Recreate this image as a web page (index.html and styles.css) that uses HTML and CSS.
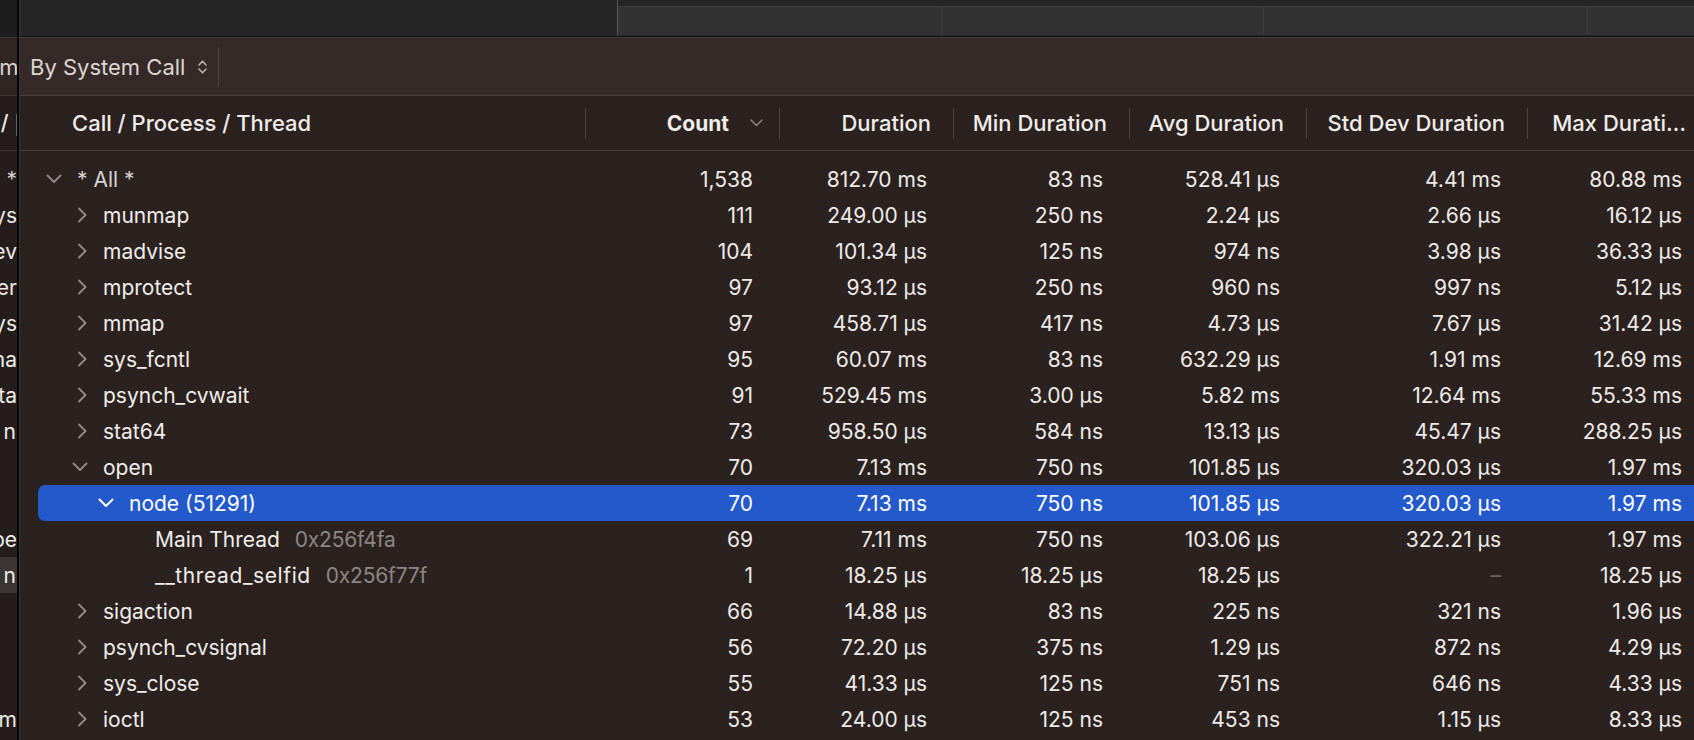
FILE: index.html
```html
<!DOCTYPE html>
<html lang="en">
<head>
<meta charset="utf-8">
<title>System Calls</title>
<link rel="stylesheet" href="styles.css">
</head>
<body>
<div class="app">
  <aside class="side">
    <div class="side-top"></div>
    <div class="side-toolbar"><span class="clip">By System</span></div>
    <div class="side-header"><span class="clip">Call / <i class="side-sep"></i></span></div>
    <div class="side-body">
      <div class="side-row"><span class="clip dim">* All&nbsp;*</span></div>
      <div class="side-row"><span class="clip">sys</span></div>
      <div class="side-row"><span class="clip">dev</span></div>
      <div class="side-row"><span class="clip">ker</span></div>
      <div class="side-row"><span class="clip">sys</span></div>
      <div class="side-row"><span class="clip">ma</span></div>
      <div class="side-row"><span class="clip">sta</span></div>
      <div class="side-row"><span class="clip short">n</span></div>
      <div class="side-row"></div>
      <div class="side-row"></div>
      <div class="side-row"><span class="clip">ope</span></div>
      <div class="side-row side-sel"><span class="clip short">n</span></div>
      <div class="side-row"></div>
      <div class="side-row"></div>
      <div class="side-row"></div>
      <div class="side-row"><span class="clip">comm</span></div>
    </div>
  </aside>
  <div class="divider"></div>
  <main class="main">
    <div class="top">
      <div class="top-left"></div>
      <div class="top-right">
        <div class="track">
          <div class="track-cell"></div>
          <div class="track-cell"></div>
          <div class="track-cell"></div>
          <div class="track-cell"></div>
        </div>
      </div>
    </div>

    <div class="toolbar">
      <span class="picker">By System Call</span>
      <svg class="updown" width="11" height="16" viewBox="0 0 11 16"><path d="M2 6 L5.5 2.2 L9 6 M2 10 L5.5 13.8 L9 10" fill="none" stroke="#b9b2af" stroke-width="1.6" stroke-linecap="round" stroke-linejoin="round"/></svg>
      <span class="tb-sep"></span>
    </div>

    <div class="table">
      <div class="thead">
        <div class="th th-call">Call / Process / Thread</div>
        <div class="th num sorted"><span>Count</span><svg class="sort" width="13" height="8" viewBox="0 0 13 8"><path d="M1 1 L6.5 6.5 L12 1" fill="none" stroke="#8a8482" stroke-width="1.5" stroke-linecap="round" stroke-linejoin="round"/></svg></div>
        <div class="th num">Duration</div>
        <div class="th num">Min Duration</div>
        <div class="th num">Avg Duration</div>
        <div class="th num">Std Dev Duration</div>
        <div class="th num th-last">Max Durati…</div>
      </div>

      <div class="tbody">
        <div class="row">
          <div class="call lvl0"><span class="chev"><svg width="16" height="10" viewBox="0 0 16 10"><path d="M1.5 1.5 L8 8 L14.5 1.5"/></svg></span><span class="label dim">* All *</span></div>
          <div class="td">1,538</div><div class="td">812.70 ms</div><div class="td">83 ns</div><div class="td">528.41 µs</div><div class="td">4.41 ms</div><div class="td">80.88 ms</div>
        </div>
        <div class="row">
          <div class="call lvl1"><span class="chev"><svg class="r" width="10" height="16" viewBox="0 0 10 16"><path d="M2 1.5 L8.5 8 L2 14.5"/></svg></span><span class="label">munmap</span></div>
          <div class="td">111</div><div class="td">249.00 µs</div><div class="td">250 ns</div><div class="td">2.24 µs</div><div class="td">2.66 µs</div><div class="td">16.12 µs</div>
        </div>
        <div class="row">
          <div class="call lvl1"><span class="chev"><svg class="r" width="10" height="16" viewBox="0 0 10 16"><path d="M2 1.5 L8.5 8 L2 14.5"/></svg></span><span class="label">madvise</span></div>
          <div class="td">104</div><div class="td">101.34 µs</div><div class="td">125 ns</div><div class="td">974 ns</div><div class="td">3.98 µs</div><div class="td">36.33 µs</div>
        </div>
        <div class="row">
          <div class="call lvl1"><span class="chev"><svg class="r" width="10" height="16" viewBox="0 0 10 16"><path d="M2 1.5 L8.5 8 L2 14.5"/></svg></span><span class="label">mprotect</span></div>
          <div class="td">97</div><div class="td">93.12 µs</div><div class="td">250 ns</div><div class="td">960 ns</div><div class="td">997 ns</div><div class="td">5.12 µs</div>
        </div>
        <div class="row">
          <div class="call lvl1"><span class="chev"><svg class="r" width="10" height="16" viewBox="0 0 10 16"><path d="M2 1.5 L8.5 8 L2 14.5"/></svg></span><span class="label">mmap</span></div>
          <div class="td">97</div><div class="td">458.71 µs</div><div class="td">417 ns</div><div class="td">4.73 µs</div><div class="td">7.67 µs</div><div class="td">31.42 µs</div>
        </div>
        <div class="row">
          <div class="call lvl1"><span class="chev"><svg class="r" width="10" height="16" viewBox="0 0 10 16"><path d="M2 1.5 L8.5 8 L2 14.5"/></svg></span><span class="label">sys_fcntl</span></div>
          <div class="td">95</div><div class="td">60.07 ms</div><div class="td">83 ns</div><div class="td">632.29 µs</div><div class="td">1.91 ms</div><div class="td">12.69 ms</div>
        </div>
        <div class="row">
          <div class="call lvl1"><span class="chev"><svg class="r" width="10" height="16" viewBox="0 0 10 16"><path d="M2 1.5 L8.5 8 L2 14.5"/></svg></span><span class="label">psynch_cvwait</span></div>
          <div class="td">91</div><div class="td">529.45 ms</div><div class="td">3.00 µs</div><div class="td">5.82 ms</div><div class="td">12.64 ms</div><div class="td">55.33 ms</div>
        </div>
        <div class="row">
          <div class="call lvl1"><span class="chev"><svg class="r" width="10" height="16" viewBox="0 0 10 16"><path d="M2 1.5 L8.5 8 L2 14.5"/></svg></span><span class="label">stat64</span></div>
          <div class="td">73</div><div class="td">958.50 µs</div><div class="td">584 ns</div><div class="td">13.13 µs</div><div class="td">45.47 µs</div><div class="td">288.25 µs</div>
        </div>
        <div class="row">
          <div class="call lvl1"><span class="chev"><svg width="16" height="10" viewBox="0 0 16 10"><path d="M1.5 1.5 L8 8 L14.5 1.5"/></svg></span><span class="label">open</span></div>
          <div class="td">70</div><div class="td">7.13 ms</div><div class="td">750 ns</div><div class="td">101.85 µs</div><div class="td">320.03 µs</div><div class="td">1.97 ms</div>
        </div>
        <div class="row sel">
          <div class="call lvl2"><span class="chev"><svg width="16" height="10" viewBox="0 0 16 10"><path d="M1.5 1.5 L8 8 L14.5 1.5"/></svg></span><span class="label">node (51291)</span></div>
          <div class="td">70</div><div class="td">7.13 ms</div><div class="td">750 ns</div><div class="td">101.85 µs</div><div class="td">320.03 µs</div><div class="td">1.97 ms</div>
        </div>
        <div class="row">
          <div class="call lvl3"><span class="label">Main Thread</span><span class="tid">0x256f4fa</span></div>
          <div class="td">69</div><div class="td">7.11 ms</div><div class="td">750 ns</div><div class="td">103.06 µs</div><div class="td">322.21 µs</div><div class="td">1.97 ms</div>
        </div>
        <div class="row">
          <div class="call lvl3"><span class="label uscore">__thread_selfid</span><span class="tid">0x256f77f</span></div>
          <div class="td">1</div><div class="td">18.25 µs</div><div class="td">18.25 µs</div><div class="td">18.25 µs</div><div class="td none">–</div><div class="td">18.25 µs</div>
        </div>
        <div class="row">
          <div class="call lvl1"><span class="chev"><svg class="r" width="10" height="16" viewBox="0 0 10 16"><path d="M2 1.5 L8.5 8 L2 14.5"/></svg></span><span class="label">sigaction</span></div>
          <div class="td">66</div><div class="td">14.88 µs</div><div class="td">83 ns</div><div class="td">225 ns</div><div class="td">321 ns</div><div class="td">1.96 µs</div>
        </div>
        <div class="row">
          <div class="call lvl1"><span class="chev"><svg class="r" width="10" height="16" viewBox="0 0 10 16"><path d="M2 1.5 L8.5 8 L2 14.5"/></svg></span><span class="label">psynch_cvsignal</span></div>
          <div class="td">56</div><div class="td">72.20 µs</div><div class="td">375 ns</div><div class="td">1.29 µs</div><div class="td">872 ns</div><div class="td">4.29 µs</div>
        </div>
        <div class="row">
          <div class="call lvl1"><span class="chev"><svg class="r" width="10" height="16" viewBox="0 0 10 16"><path d="M2 1.5 L8.5 8 L2 14.5"/></svg></span><span class="label">sys_close</span></div>
          <div class="td">55</div><div class="td">41.33 µs</div><div class="td">125 ns</div><div class="td">751 ns</div><div class="td">646 ns</div><div class="td">4.33 µs</div>
        </div>
        <div class="row">
          <div class="call lvl1"><span class="chev"><svg class="r" width="10" height="16" viewBox="0 0 10 16"><path d="M2 1.5 L8.5 8 L2 14.5"/></svg></span><span class="label">ioctl</span></div>
          <div class="td">53</div><div class="td">24.00 µs</div><div class="td">125 ns</div><div class="td">453 ns</div><div class="td">1.15 µs</div><div class="td">8.33 µs</div>
        </div>
      </div>
    </div>
  </main>
</div>
</body>
</html>
```

FILE: styles.css
```css
* { box-sizing: border-box; }

html, body {
  margin: 0;
  padding: 0;
  width: 1694px;
  height: 740px;
  overflow: hidden;
  background: #2b2220;
}

body {
  font-family: Inter, "Noto Sans", "Liberation Sans", sans-serif;
  font-size: 21px;
  color: #efebe9;
}

.app {
  display: flex;
  width: 1694px;
  height: 740px;
  overflow: hidden;
}

/* ---------- left clipped panel ---------- */
.side {
  width: 17px;
  flex: none;
  display: flex;
  flex-direction: column;
  background: #241d1c;
  overflow: hidden;
}
.side-top { height: 37px; background: #1d1d1d; flex: none; }
.side-toolbar {
  height: 59px;
  flex: none;
  background: #2f2522;
  border-top: 1px solid #3d3331;
  border-bottom: 1px solid #403633;
  display: flex;
  justify-content: flex-end;
  align-items: center;
  color: #d9d3d0;
  font-size: 22px;
  letter-spacing: -1.5px;
}
.side-header {
  height: 55px;
  flex: none;
  border-bottom: 1px solid #3f3533;
  display: flex;
  justify-content: flex-end;
  align-items: center;
  font-weight: 500;
}
.side-sep {
  display: inline-block;
  width: 1px;
  height: 22px;
  margin-left: 2px;
  background: #6a625f;
  vertical-align: middle;
}
.side-body { padding-top: 10px; }
.side-row {
  height: 36px;
  display: flex;
  justify-content: flex-end;
  align-items: center;
}
.side-sel { background: #3b3534; }
.clip { white-space: nowrap; flex: none; }
.clip.short { margin-right: 1px; }
.dim { color: #d6d2d0; }

.divider {
  width: 2px;
  flex: none;
  background: #060606;
}

/* ---------- main ---------- */
.main {
  flex: none;
  width: 1675px;
  border-left: 1px solid #3b3331;
  display: flex;
  flex-direction: column;
}

.top {
  height: 37px;
  flex: none;
  display: flex;
  background: #252525;
  border-bottom: 1px solid #161616;
}
.top-left {
  width: 598px;
  flex: none;
  border-right: 1px solid #5a5a5a;
}
.top-right {
  flex: 1;
  padding-top: 6px;
}
.track {
  height: 29px;
  display: grid;
  grid-template-columns: 323px 322px 324px 1fr;
  background: #323232;
  border-top: 1px solid #3e3e3e;
}
.track-cell + .track-cell { border-left: 1px solid #3d3d3d; }

.toolbar {
  height: 59px;
  flex: none;
  display: flex;
  align-items: center;
  padding-left: 10px;
  background: #352a27;
  border-top: 1px solid #463b38;
  border-bottom: 1px solid #4a3f3c;
}
.picker { color: #dcd6d3; font-size: 22px; }
.updown { margin-left: 12px; }
.tb-sep {
  width: 1px;
  height: 39px;
  margin-left: 10px;
  background: #4e4442;
}

/* ---------- table ---------- */
.table {
  --cols: 565px 194px 174px 176px 177px 221px 181px;
}
.thead {
  height: 55px;
  display: grid;
  grid-template-columns: var(--cols);
  align-items: center;
  border-bottom: 1px solid #463c3a;
}
.th {
  font-weight: 500;
  font-size: 22px;
  color: #f0ecea;
  white-space: nowrap;
  height: 31px;
  display: flex;
  align-items: center;
}
.th-call { padding-left: 52px; }
.th.num {
  justify-content: flex-end;
  padding-right: 22px;
  border-left: 1px solid #4e4442;
}
.th.sorted { font-weight: 700; padding-right: 16px; font-size: 21px; }
.th.sorted .sort { margin-left: 21px; }
.th-last { padding-right: 9px; }

.tbody { padding-top: 10px; }
.row {
  height: 36px;
  display: grid;
  grid-template-columns: var(--cols);
  align-items: center;
  white-space: nowrap;
}
.row.sel {
  margin-left: 18px;
  grid-template-columns: 547px 194px 174px 176px 177px 221px 181px;
  background: #2459cc;
  border-radius: 7px 0 0 7px;
  color: #ffffff;
}
.call {
  display: flex;
  align-items: center;
  overflow: hidden;
}
.lvl0 { padding-left: 21px; }
.lvl1 { padding-left: 47px; }
.lvl2 { padding-left: 73px; }
.lvl3 { padding-left: 135px; }
.sel .lvl2 { padding-left: 55px; }

.chev {
  width: 26px;
  flex: none;
  display: flex;
  justify-content: center;
  align-items: center;
  margin-right: 10px;
}
.chev svg path {
  fill: none;
  stroke: #8f8987;
  stroke-width: 2;
  stroke-linecap: round;
  stroke-linejoin: round;
}
.chev svg.r { margin-left: 4px; }
.sel .chev svg path { stroke: #ffffff; }

.label { color: #f1edeb; }
.label.dim { color: #d8d3d1; }
.label.uscore { letter-spacing: 0.6px; }
.sel .label { color: #ffffff; }
.tid { color: #8d8684; margin-left: 15px; letter-spacing: -0.2px; }

.td {
  text-align: right;
  padding-right: 26px;
  color: #efebe9;
}
.sel .td { color: #ffffff; }
.td.none { color: #6b6361; }
```
